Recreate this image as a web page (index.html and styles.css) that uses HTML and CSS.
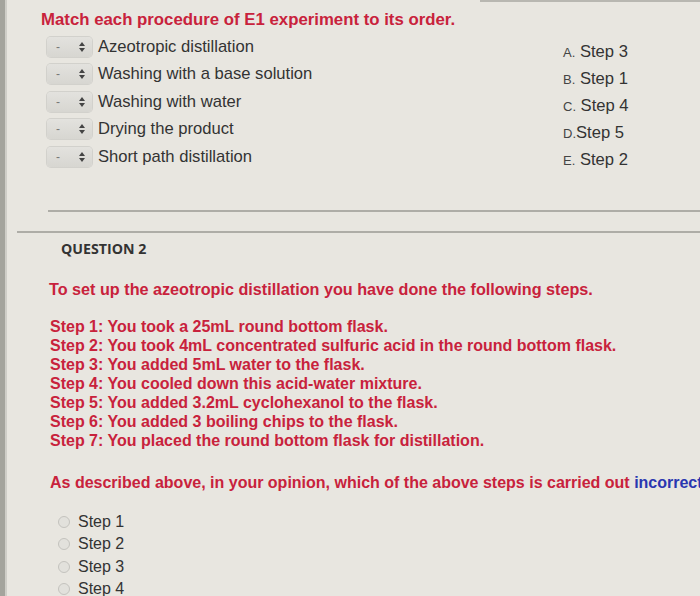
FILE: index.html
```html
<!DOCTYPE html>
<html>
<head>
<meta charset="utf-8">
<link rel="stylesheet" href="styles.css">
</head>
<body>
<div class="page">
  <div class="top-rule"></div>
  <h1 class="title">Match each procedure of E1 experiment to its order.</h1>
  <div class="match">
    <div class="items">
      <div class="item"><span class="sel"><span class="dash">-</span><span class="arrows"><i class="up"></i><i class="down"></i></span></span><span class="label">Azeotropic distillation</span></div>
      <div class="item"><span class="sel"><span class="dash">-</span><span class="arrows"><i class="up"></i><i class="down"></i></span></span><span class="label">Washing with a base solution</span></div>
      <div class="item"><span class="sel"><span class="dash">-</span><span class="arrows"><i class="up"></i><i class="down"></i></span></span><span class="label">Washing with water</span></div>
      <div class="item"><span class="sel"><span class="dash">-</span><span class="arrows"><i class="up"></i><i class="down"></i></span></span><span class="label">Drying the product</span></div>
      <div class="item"><span class="sel"><span class="dash">-</span><span class="arrows"><i class="up"></i><i class="down"></i></span></span><span class="label">Short path distillation</span></div>
    </div>
    <div class="answers">
      <div class="ans"><span class="letter">A.</span> Step 3</div>
      <div class="ans"><span class="letter">B.</span> Step 1</div>
      <div class="ans"><span class="letter">C.</span> Step 4</div>
      <div class="ans"><span class="letter">D.</span>Step 5</div>
      <div class="ans"><span class="letter">E.</span> Step 2</div>
    </div>
  </div>
  <div class="rule rule1"></div>
  <div class="rule rule2"></div>
  <h2 class="qhead">QUESTION 2</h2>
  <p class="prompt">To set up the azeotropic distillation you have done the following steps.</p>
  <div class="steps">
    <div>Step 1: You took a 25mL round bottom flask.</div>
    <div>Step 2: You took 4mL concentrated sulfuric acid in the round bottom flask.</div>
    <div>Step 3: You added 5mL water to the flask.</div>
    <div>Step 4: You cooled down this acid-water mixture.</div>
    <div>Step 5: You added 3.2mL cyclohexanol to the flask.</div>
    <div>Step 6: You added 3 boiling chips to the flask.</div>
    <div>Step 7: You placed the round bottom flask for distillation.</div>
  </div>
  <p class="ask">As described above, in your opinion, which of the above steps is carried out <span class="blue">incorrectly?</span></p>
  <div class="options">
    <label class="opt"><span class="radio"></span>Step 1</label>
    <label class="opt"><span class="radio"></span>Step 2</label>
    <label class="opt"><span class="radio"></span>Step 3</label>
    <label class="opt"><span class="radio"></span>Step 4</label>
  </div>
</div>
</body>
</html>
```

FILE: styles.css
```css
html, body {
  margin: 0;
  padding: 0;
  background: #e8e6e0;
}
body {
  font-family: "Liberation Sans", Arial, sans-serif;
  color: #333;
  overflow: hidden;
  width: 700px;
  height: 596px;
}
.page {
  border-left: 5px solid #a4a49d;
  box-shadow: inset 2px 0 0 #cfcec8;
  height: 596px;
  box-sizing: border-box;
  overflow: hidden;
}
.top-rule {
  height: 2px;
  margin-left: 475px;
  background: #b8b7b1;
}
.title {
  margin: 8px 0 0 36px;
  font-size: 16.8px;
  line-height: 20px;
  font-weight: bold;
  color: #c8223c;
  white-space: nowrap;
}
.match {
  display: flex;
  margin-top: 3px;
}
.items {
  margin-left: 42px;
  width: 516px;
}
.item {
  height: 27.5px;
  display: flex;
  align-items: center;
}
.sel {
  width: 45px;
  height: 20px;
  border-radius: 4px;
  background: linear-gradient(#e3e2de, #d7d6d1);
  box-shadow: 0 0 0 1px #d2d1cc;
  display: flex;
  align-items: center;
  box-sizing: border-box;
  padding-left: 9px;
  color: #777;
  font-size: 12px;
}
.dash { flex: 1; }
.arrows {
  display: flex;
  flex-direction: column;
  gap: 2px;
  margin-right: 7px;
}
.arrows i {
  display: block;
  width: 0;
  height: 0;
  border-left: 3px solid transparent;
  border-right: 3px solid transparent;
}
.arrows .up { border-bottom: 4px solid #444; }
.arrows .down { border-top: 4px solid #444; }
.label {
  margin-left: 6px;
  font-size: 16.6px;
  color: #333;
  white-space: nowrap;
}
.answers {
  padding-top: 5px;
}
.ans {
  height: 27px;
  line-height: 27px;
  font-size: 16.6px;
  color: #333;
  white-space: nowrap;
}
.letter {
  font-size: 13px;
  color: #444;
}
.rule {
  height: 1.5px;
  background: #aeada7;
}
.rule1 { margin: 37px 0 0 43px; }
.rule2 { margin: 19.5px 0 0 12px; }
.qhead {
  margin: 6px 0 0 56px;
  font-family: "Open Sans", sans-serif;
  font-size: 14.2px;
  font-weight: 700;
  line-height: 20px;
  color: #333;
}
.prompt {
  margin: 20px 0 0 44px;
  font-size: 16.2px;
  line-height: 20px;
  font-weight: bold;
  color: #c8223c;
  white-space: nowrap;
}
.steps {
  margin: 18px 0 0 45px;
  font-size: 16px;
  line-height: 19px;
  font-weight: bold;
  color: #c8223c;
  white-space: nowrap;
}
.ask {
  margin: 23px 0 0 45px;
  font-size: 16px;
  line-height: 20px;
  font-weight: bold;
  color: #c8223c;
  white-space: nowrap;
}
.blue { color: #2a36b0; }
.options {
  margin: 18px 0 0 53px;
}
.opt {
  display: flex;
  align-items: center;
  height: 22.5px;
  font-size: 16px;
  color: #333;
}
.radio {
  width: 10px;
  height: 10px;
  border-radius: 50%;
  border: 1px solid #c4c3be;
  background: #e2e1dc;
  margin-right: 8px;
}
```
